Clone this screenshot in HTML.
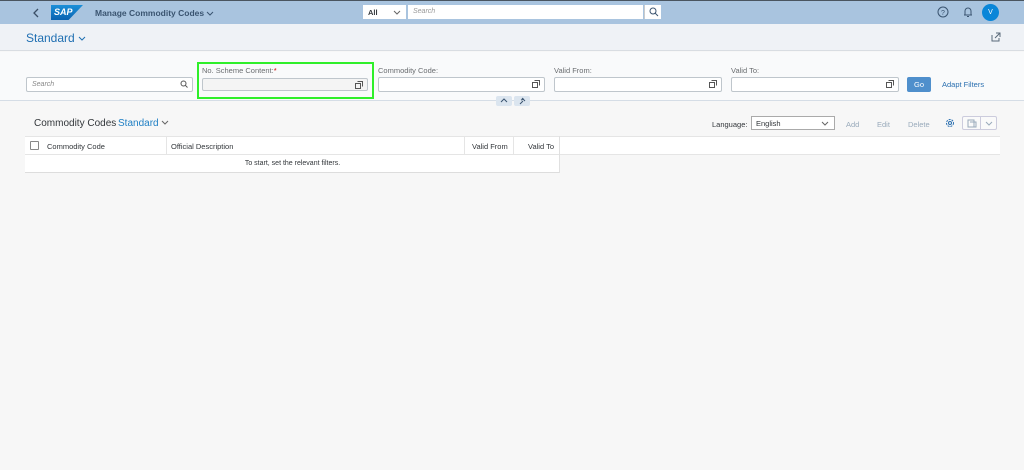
<!DOCTYPE html>
<html><head><style>
*{box-sizing:border-box;margin:0;padding:0}
body{width:1024px;height:470px;overflow:hidden;background:#f7f7f7;font-family:"Liberation Sans",sans-serif;font-size:8px;color:#32363a;position:relative}
.a{position:absolute}
.inp{position:absolute;height:15px;background:#fff;border:1px solid #bfc6cc;border-radius:2px}
.vh{position:absolute;right:4px;top:2px;width:8px;height:8px}
.lbl{position:absolute;color:#6a6d70;font-size:7.5px}
.chev{display:inline-block;vertical-align:middle}
</style></head><body>
<div class="a" style="left:0;top:0;width:1024px;height:1px;background:#4a5560"></div>
<div class="a" style="left:0;top:1px;width:1024px;height:23px;background:#a9c4df"></div>
<svg class="a" style="left:32px;top:8px" width="8" height="10"><path d="M6 1L2 5l4 4" fill="none" stroke="#3a4e66" stroke-width="1.3"/></svg>
<div class="a" style="left:51px;top:5px;width:32px;height:15px;background:linear-gradient(#1c8fd8,#0a62b0);clip-path:polygon(0 0,100% 0,55% 100%,0 100%);color:#fff;font-weight:bold;font-size:9px;padding:2px 0 0 3px;font-style:italic">SAP</div>
<div class="a" style="left:95px;top:8px;font-size:8.5px;color:#3a5470;font-weight:bold">Manage Commodity Codes <svg class="chev" width="8" height="6"><path d="M1 1l3 3 3-3" fill="none" stroke="#3a5470"/></svg></div>
<div class="a" style="left:363px;top:5px;width:43px;height:14px;background:#fff;font-size:7.5px;font-weight:bold;padding:3px 5px">All<svg style="position:absolute;right:5px;top:5px" width="8" height="6"><path d="M1 1l3 3 3-3" fill="none" stroke="#666"/></svg></div>
<div class="a" style="left:408px;top:5px;width:235px;height:14px;background:#fff;font-size:7px;font-style:italic;color:#999;padding:3px 5px">Search</div>
<div class="a" style="left:644px;top:5px;width:17px;height:14px;background:#fff;border-left:1px solid #ccc"><svg width="17" height="14"><circle cx="8" cy="6" r="3" fill="none" stroke="#3a5470"/><path d="M10 8l3 3" stroke="#3a5470"/></svg></div>
<svg class="a" style="left:937px;top:6px" width="12" height="12"><circle cx="6" cy="6" r="5" fill="none" stroke="#3a5470"/><text x="4" y="9" font-size="7" fill="#3a5470">?</text></svg>
<svg class="a" style="left:962px;top:6px" width="12" height="12"><path d="M3 9V5a3 3 0 016 0v4zM2 9h8M5 10.5h2" fill="none" stroke="#3a5470"/></svg>
<div class="a" style="left:982px;top:4px;width:17px;height:17px;border-radius:50%;background:#0a86d8;color:#fff;font-size:7px;text-align:center;line-height:17px">V</div>
<div class="a" style="left:0;top:24px;width:1024px;height:27px;background:#eff2f6;border-bottom:1px solid #d9dde2"></div>
<div class="a" style="left:26px;top:31px;font-size:12px;color:#1f6fb2">Standard <svg class="chev" width="8" height="6"><path d="M1 1l3 3 3-3" fill="none" stroke="#1f6fb2"/></svg></div>
<svg class="a" style="left:991px;top:32px" width="10" height="10"><path d="M1 3v6h7V6M5 1h4v4M9 1L4 6" fill="none" stroke="#5a6a7a"/></svg>
<div class="a" style="left:0;top:52px;width:1024px;height:49px;background:#f9fafb;border-bottom:1px solid #d5dde6"></div>
<div class="inp" style="left:26px;top:77px;width:167px"><span style="position:absolute;left:5px;top:3px;font-size:7px;font-style:italic;color:#888">Search</span><svg class="vh" viewBox="0 0 8 8"><circle cx="3.5" cy="3.5" r="2.5" fill="none" stroke="#555"/><path d="M5.3 5.3L7.5 7.5" stroke="#555"/></svg></div>
<div class="a" style="left:197px;top:62px;width:177px;height:37px;border:2px solid #2fef2a"></div>
<div class="lbl" style="left:202px;top:66px">No. Scheme Content:<span style="color:#c00">*</span></div>
<div class="inp" style="left:202px;top:78px;width:166px;height:13px;background:#f4f4f4"><svg class="vh" viewBox="0 0 8 8"><path d="M.5 2.5h5v5h-5zM2.5.5h5v5" fill="none" stroke="#555"/></svg></div>
<div class="lbl" style="left:378px;top:66px">Commodity Code:</div>
<div class="inp" style="left:378px;top:77px;width:167px"><svg class="vh" viewBox="0 0 8 8"><path d="M.5 2.5h5v5h-5zM2.5.5h5v5" fill="none" stroke="#555"/></svg></div>
<div class="lbl" style="left:554px;top:66px">Valid From:</div>
<div class="inp" style="left:554px;top:77px;width:168px"><svg class="vh" viewBox="0 0 8 8"><path d="M.5 2.5h5v5h-5zM2.5.5h5v5" fill="none" stroke="#555"/></svg></div>
<div class="lbl" style="left:731px;top:66px">Valid To:</div>
<div class="inp" style="left:731px;top:77px;width:168px"><svg class="vh" viewBox="0 0 8 8"><path d="M.5 2.5h5v5h-5zM2.5.5h5v5" fill="none" stroke="#555"/></svg></div>
<div class="a" style="left:907px;top:77px;width:24px;height:15px;background:#4f8fcc;border-radius:2px;color:#fff;font-size:7.5px;text-align:center;line-height:15px">Go</div>
<div class="a" style="left:942px;top:80px;font-size:7.5px;color:#2a6fb0">Adapt Filters</div>
<div class="a" style="left:496px;top:96px;width:16px;height:10px;background:#dbe5ef;border-radius:2px"><svg width="16" height="10"><path d="M5 6l3-3 3 3" fill="none" stroke="#3a5470"/></svg></div>
<div class="a" style="left:514px;top:96px;width:16px;height:10px;background:#dbe5ef;border-radius:2px"><svg width="16" height="10"><path d="M6 8l3-3M8 2l3 3M7 4l3-1" fill="none" stroke="#3a5470"/></svg></div>
<div class="a" style="left:34px;top:118px;font-size:10px">Commodity Codes</div>
<div class="a" style="left:118px;top:118px;font-size:10px;color:#1f7fc4">Standard <svg class="chev" width="8" height="6"><path d="M1 1l3 3 3-3" fill="none" stroke="#666"/></svg></div>
<div class="a" style="left:712px;top:120px;font-size:7.5px">Language:</div>
<div class="a" style="left:751px;top:116px;width:84px;height:14px;background:#fff;border:1px solid #aaa;font-size:7.5px;padding:2px 4px">English<svg style="position:absolute;right:5px;top:4px" width="8" height="6"><path d="M1 1l3 3 3-3" fill="none" stroke="#666"/></svg></div>
<div class="a" style="left:846px;top:120px;font-size:7.5px;color:#9ab">Add</div>
<div class="a" style="left:877px;top:120px;font-size:7.5px;color:#9ab">Edit</div>
<div class="a" style="left:908px;top:120px;font-size:7.5px;color:#9ab">Delete</div>
<svg class="a" style="left:945px;top:118px" width="10" height="10"><circle cx="5" cy="5" r="3.5" fill="none" stroke="#2a6fb0" stroke-dasharray="2 1"/><circle cx="5" cy="5" r="1.5" fill="none" stroke="#2a6fb0"/></svg>
<div class="a" style="left:962px;top:116px;width:35px;height:14px;border:1px solid #ccd;border-radius:2px;background:#fafafa"><div class="a" style="left:17px;top:0;width:1px;height:12px;background:#ccd"></div><svg class="a" style="left:4px;top:2px" width="10" height="9"><path d="M1 1h6v7H1zM3 3h6v5H3" fill="none" stroke="#9ab"/></svg><svg class="a" style="left:22px;top:4px" width="8" height="6"><path d="M1 1l3 3 3-3" fill="none" stroke="#9ab"/></svg></div>
<div class="a" style="left:25px;top:136px;width:975px;height:19px;background:#fff;border-top:1px solid #e5e5e5;border-bottom:1px solid #e5e5e5"></div>
<div class="a" style="left:25px;top:155px;width:535px;height:18px;background:#fff;border-bottom:1px solid #ddd"></div>
<div class="a" style="left:559px;top:136px;width:1px;height:37px;background:#e0e0e0"></div>
<div class="a" style="left:166px;top:136px;width:1px;height:19px;background:#e5e5e5"></div>
<div class="a" style="left:464px;top:136px;width:1px;height:19px;background:#e5e5e5"></div>
<div class="a" style="left:513px;top:136px;width:1px;height:19px;background:#e5e5e5"></div>
<div class="a" style="left:30px;top:141px;width:9px;height:9px;border:1px solid #888;border-radius:1px;background:#fff"></div>
<div class="a" style="left:47px;top:142px;font-size:7.5px">Commodity Code</div>
<div class="a" style="left:171px;top:142px;font-size:7.5px">Official Description</div>
<div class="a" style="left:472px;top:142px;font-size:7.5px">Valid From</div>
<div class="a" style="left:528px;top:142px;font-size:7.5px">Valid To</div>
<div class="a" style="left:25px;top:160px;width:535px;text-align:center;font-size:7px">To start, set the relevant filters.</div>
</body></html>
